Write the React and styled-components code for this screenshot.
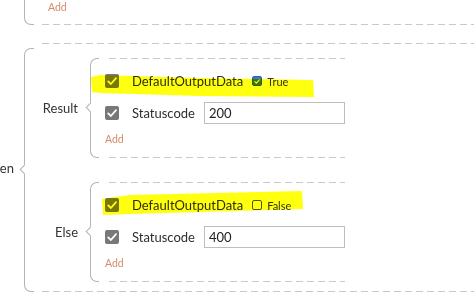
import styled, { createGlobalStyle } from "styled-components";

const GlobalStyle = createGlobalStyle`
  body {
    margin: 0;
    background: #fff;
    font-family: Lato, "Open Sans", "Liberation Sans", sans-serif;
    color: #333;
  }
`;

const Canvas = styled.div`
  position: relative;
  width: 474px;
  height: 301px;
  overflow: hidden;
  background: #fff;
`;

const Group = styled.div`
  display: flex;
  align-items: stretch;
  margin-left: ${(p) => p.$ml || 0}px;
  margin-top: ${(p) => p.$mt || 0}px;
`;

const Label = styled.div`
  width: ${(p) => p.$w}px;
  flex: none;
  display: flex;
  align-items: center;
  justify-content: flex-end;
  padding-right: ${(p) => p.$pr}px;
  box-sizing: border-box;
  font-size: 13px;
  color: #333;
`;

const Brace = styled.div`
  position: relative;
  flex: none;
  width: ${(p) => p.$w || 10}px;
  margin-top: ${(p) => p.$mt || 0}px;
  border: 1.5px solid #b4b4b4;
  border-right: none;
  border-radius: 7px 0 0 7px;
  box-sizing: border-box;
  &::before {
    content: "";
    display: ${(p) => (p.$notch === false ? "none" : "block")};
    position: absolute;
    left: -4.5px;
    top: 50%;
    width: 6px;
    height: 6px;
    margin-top: -4px;
    background: #fff;
    border-left: 1.5px solid #b4b4b4;
    border-bottom: 1.5px solid #b4b4b4;
    transform: rotate(45deg);
  }
`;

const Body = styled.div`
  flex: 1;
  display: flex;
  flex-direction: column;
  align-items: flex-start;
  gap: ${(p) => p.$gap || 0}px;
  padding: ${(p) => p.$pad};
  background-image: repeating-linear-gradient(
      to right,
      #c9c9c9 0 7px,
      transparent 7px 11px
    ),
    repeating-linear-gradient(to right, #c9c9c9 0 7px, transparent 7px 11px);
  background-repeat: no-repeat;
  background-size: calc(100% - ${(p) => p.$inset}px) 1px;
  background-position: ${(p) => p.$inset}px 0, ${(p) => p.$inset}px 100%;
`;

const Row = styled.div`
  display: flex;
  align-items: center;
  height: ${(p) => p.$h}px;
  margin-top: ${(p) => p.$mt || 0}px;
`;

const BigCheck = styled.span`
  width: 14px;
  height: 14px;
  flex: none;
  border-radius: 2px;
  background: #787878;
  display: flex;
  align-items: center;
  justify-content: center;
  margin-right: 13px;
`;

const FieldName = styled.span`
  font-size: 13px;
  color: #2e2e2e;
  width: ${(p) => (p.$w ? `${p.$w}px` : "auto")};
  margin-right: ${(p) => p.$mr || 0}px;
`;

const SmallCheck = styled.span`
  width: 10px;
  height: 10px;
  flex: none;
  box-sizing: border-box;
  border-radius: 2px;
  border: 1px solid ${(p) => (p.$on ? "#2f5fb0" : "#555")};
  background: ${(p) => (p.$on ? "#3a78d6" : "#fff")};
  display: flex;
  align-items: center;
  justify-content: center;
  margin-right: 5px;
`;

const SmallText = styled.span`
  font-size: 11px;
  color: #333;
`;

const Field = styled.div`
  width: 141px;
  height: 22px;
  box-sizing: border-box;
  border: 1px solid #bdbdbd;
  padding-left: 4px;
  display: flex;
  align-items: center;
  font-size: 13px;
  color: #222;
  background: #fff;
`;

const AddLink = styled.span`
  font-size: 10.5px;
  line-height: 14px;
  color: #d58a6b;
  margin-top: ${(p) => p.$mt || 0}px;
`;

const Highlight = styled.svg`
  position: absolute;
  left: 0;
  top: 0;
  pointer-events: none;
  mix-blend-mode: multiply;
`;

const Tick = ({ size = 14 }) => (
  <svg width={size} height={size} viewBox="0 0 14 14">
    <polyline
      points="3.2,7.4 5.9,10 11,4.2"
      fill="none"
      stroke="#fff"
      strokeWidth="1.8"
      strokeLinecap="round"
      strokeLinejoin="round"
    />
  </svg>
);

function Branch({ label, flag, code }) {
  return (
    <Group>
      <Label $w={56} $pr={12}>
        {label}
      </Label>
      <Brace $w={9} />
      <Body $pad="13px 0 12px 6px" $inset={10}>
        <Row $h={20}>
          <BigCheck>
            <Tick />
          </BigCheck>
          <FieldName $mr={9}>DefaultOutputData</FieldName>
          <SmallCheck $on={flag}>{flag && <Tick size={9} />}</SmallCheck>
          <SmallText>{flag ? "True" : "False"}</SmallText>
        </Row>
        <Row $h={22} $mt={11}>
          <BigCheck>
            <Tick />
          </BigCheck>
          <FieldName $w={72}>Statuscode</FieldName>
          <Field>{code}</Field>
        </Row>
        <AddLink $mt={8}>Add</AddLink>
      </Body>
    </Group>
  );
}

export default function App() {
  return (
    <Canvas>
      <GlobalStyle />
      <Group $ml={-40} $mt={-30}>
        <Label $w={64} $pr={10} />
        <Brace $notch={false} />
        <Body $pad="30px 0 11px 14px" $inset={8}>
          <AddLink>Add</AddLink>
        </Body>
      </Group>

      <Group $ml={-40} $mt={18}>
        <Label $w={64} $pr={10}>
          Then
        </Label>
        <Brace $mt={5} />
        <Body $pad="15px 0 10px 0" $inset={8} $gap={24}>
          <Branch label="Result" flag={true} code="200" />
          <Branch label="Else" flag={false} code="400" />
        </Body>
      </Group>

      <Highlight width="474" height="301">
        <path
          d="M91,77 L100,75 L200,78 L313,80 L314,97 L200,96 L100,93 L92,92 Z"
          fill="#ffff10"
        />
        <path
          d="M102,199 L130,195 L302,191 L303,209 L130,214 L103,215 Z"
          fill="#ffff10"
        />
      </Highlight>
    </Canvas>
  );
}
